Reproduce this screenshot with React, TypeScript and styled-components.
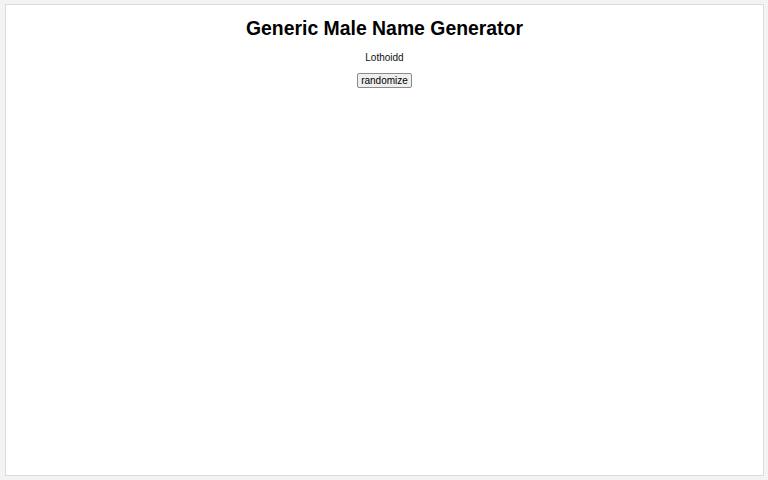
import * as React from "react";
import styled, { createGlobalStyle } from "styled-components";

const names = ["Lothoidd", "Brandor", "Kelvash", "Thoridan", "Marbek", "Ulfgar"];

const GlobalStyle = createGlobalStyle`
  html, body {
    margin: 0;
    padding: 0;
    background: #f3f3f3;
    font-family: "Liberation Sans", Arial, sans-serif;
  }
`;

const Page = styled.div`
  padding: 4px 4px 4px 5px;
  box-sizing: border-box;
  height: 480px;
`;

const Card = styled.div`
  background: #ffffff;
  border: 1px solid #dcdcdc;
  height: 100%;
  box-sizing: border-box;
  padding-top: 12px;
  display: flex;
  flex-direction: column;
  align-items: center;
`;

const Title = styled.h1`
  margin: 0;
  font-size: 19.4px;
  font-weight: bold;
  line-height: 23px;
  color: #000;
`;

const Name = styled.p`
  margin: 12px 0 0;
  font-size: 10px;
  line-height: 12px;
  color: #111;
`;

const Button = styled.button`
  margin-top: 9px;
  font-family: "Liberation Sans", Arial, sans-serif;
  font-size: 10px;
  line-height: 12px;
  padding: 0 3px;
  height: 15px;
  background: #efefef;
  border: 1px solid #8a8a8a;
  border-radius: 2px;
  color: #000;
`;

export default function App() {
  const [name, setName] = React.useState(names[0]);
  const randomize = () => setName(names[Math.floor(Math.random() * names.length)]);
  return (
    <>
      <GlobalStyle />
      <Page>
        <Card>
          <Title>Generic Male Name Generator</Title>
          <Name>{name}</Name>
          <Button onClick={randomize}>randomize</Button>
        </Card>
      </Page>
    </>
  );
}
